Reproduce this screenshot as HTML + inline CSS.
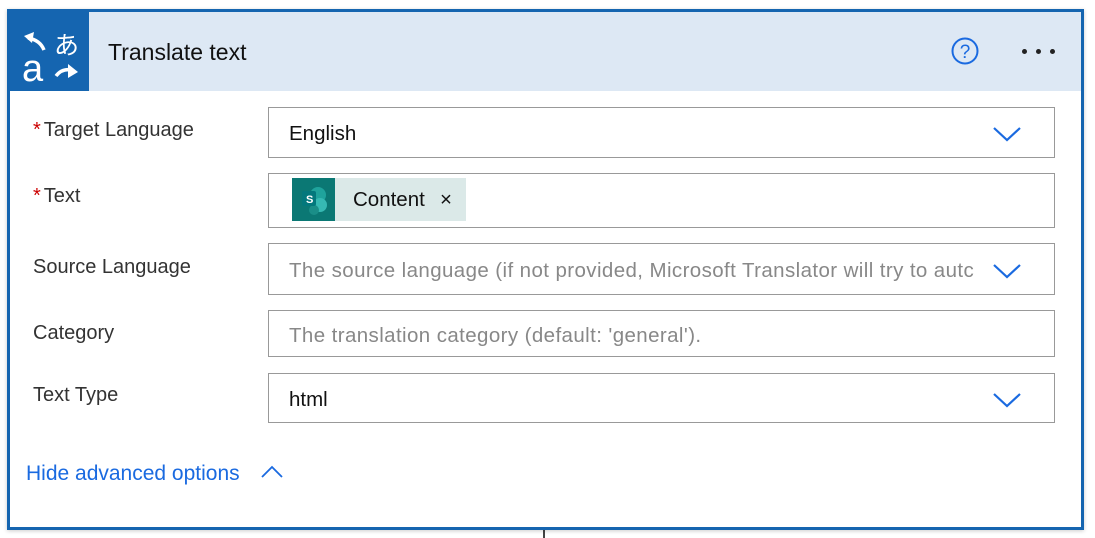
<!DOCTYPE html><html><head><style>
body{margin:0;width:1095px;height:538px;background:#fff;position:relative;overflow:hidden;font-family:"Liberation Sans",sans-serif}
.card{position:absolute;left:7px;top:9px;width:1071px;height:515px;border:3px solid #1565b0;background:#fff;box-shadow:0 1px 4px rgba(0,0,0,.2)}
.hdr{position:absolute;left:0;top:0;width:1071px;height:79px;background:#dde8f4}
.ico{position:absolute;left:0;top:0;width:79px;height:79px;background:#1565b0}
.title{position:absolute;left:98px;top:27px;font-size:23px;color:#111}
.lbl{position:absolute;left:33px;font-size:20px;color:#333}
.lbl b{color:#c00;font-weight:normal;margin-right:3px}
.in{position:absolute;left:268px;width:787px;border:1px solid #999;background:#fff;box-sizing:border-box}
.in span{position:absolute;left:20px;font-size:20.5px}
.ph{color:#888}
.chev{position:absolute;right:32px}
</style></head><body>
<div style="position:absolute;left:543px;top:528px;width:2px;height:10px;background:#444"></div>
<div class="card">
<div class="hdr">
<div class="ico"><svg width="79" height="79" viewBox="0 0 79 79">
<text x="12" y="69" font-size="38" fill="#fff" font-family="Liberation Sans">a</text>
<text x="44" y="42" font-size="25" fill="#fff" font-family="Noto Sans CJK JP">あ</text>
<path d="M34 38 Q30 28 18 26" stroke="#fff" stroke-width="3.5" fill="none"/>
<path d="M14 24 L24 20 L22 31 Z" fill="#fff"/>
<path d="M46 64 Q52 56 62 58" stroke="#fff" stroke-width="3.5" fill="none"/>
<path d="M68 60 L58 52 L58 66 Z" fill="#fff"/>
</svg></div>
<div class="title">Translate text</div>
<svg style="position:absolute;left:940px;top:24px" width="30" height="30"><circle cx="15" cy="15" r="12.5" stroke="#1a6ae0" stroke-width="2" fill="none"/><text x="15" y="22" text-anchor="middle" font-size="19" fill="#1a6ae0" font-family="Liberation Sans">?</text></svg>
<div style="position:absolute;left:1012px;top:37px;width:5px;height:5px;border-radius:50%;background:#222;box-shadow:14px 0 #222,28px 0 #222"></div>
</div>
</div>
<div class="lbl" style="top:119px"><b>*</b>Target Language</div>
<div class="lbl" style="top:185px"><b>*</b>Text</div>
<div class="lbl" style="top:256px">Source Language</div>
<div class="lbl" style="top:322px">Category</div>
<div class="lbl" style="top:384px">Text Type</div>
<div class="in" style="top:107px;height:51px"><span style="top:14px;color:#111">English</span>
<svg class="chev" style="top:17px" width="30" height="18"><path d="M2 3 L15 15 L28 3" stroke="#1a6ae0" stroke-width="2.2" fill="none"/></svg></div>
<div class="in" style="top:173px;height:55px">
<div style="position:absolute;left:23px;top:4px;width:174px;height:43px;background:#dbe9e8">
<div style="position:absolute;left:0;top:0;width:43px;height:43px;background:#0b7874"><svg width="43" height="43"><circle cx="26" cy="17" r="8" fill="#1fa39c"/><circle cx="28" cy="27" r="7" fill="#36b9b3"/><circle cx="22" cy="32" r="5" fill="#1a8e88"/><rect x="10" y="13" width="14" height="15" rx="2" fill="#03787c"/><text x="14" y="25" font-size="11" fill="#fff" font-family="Liberation Sans" font-weight="bold">S</text></svg></div>
<span style="left:61px;top:10px;color:#111">Content</span><span style="left:148px;top:10px;color:#111">×</span></div></div>
<div class="in" style="top:243px;height:52px"><span class="ph" style="top:15px;white-space:nowrap;width:690px;overflow:hidden;letter-spacing:0.4px">The source language (if not provided, Microsoft Translator will try to autc</span>
<svg class="chev" style="top:18px" width="30" height="18"><path d="M2 3 L15 15 L28 3" stroke="#1a6ae0" stroke-width="2.2" fill="none"/></svg></div>
<div class="in" style="top:310px;height:47px"><span class="ph" style="top:13px;letter-spacing:0.4px">The translation category (default: 'general').</span></div>
<div class="in" style="top:373px;height:50px"><span style="top:14px;color:#111">html</span>
<svg class="chev" style="top:17px" width="30" height="18"><path d="M2 3 L15 15 L28 3" stroke="#1a6ae0" stroke-width="2.2" fill="none"/></svg></div>
<div style="position:absolute;left:26px;top:462px;font-size:21px;color:#1a6ae0">Hide advanced options</div>
<svg style="position:absolute;left:260px;top:464px" width="24" height="16"><path d="M2 13 L12 3 L22 13" stroke="#1a6ae0" stroke-width="1.8" fill="none"/></svg>
</body></html>
